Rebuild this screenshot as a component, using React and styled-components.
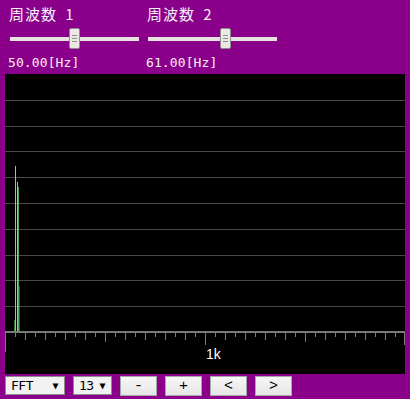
import React from "react";
import styled, { createGlobalStyle } from "styled-components";

const GlobalStyle = createGlobalStyle`
  html, body {
    margin: 0;
    padding: 0;
    background: #8b008b;
  }
`;

const sliders = [
  { label: "周波数 1", value: 50, hz: "50.00" },
  { label: "周波数 2", value: 61, hz: "61.00" },
];

const W = 400;
const AXIS = 258;

export default function App() {
  return (
    <Page>
      <GlobalStyle />
      <Controls>
        {sliders.map((s) => (
          <Group key={s.label}>
            <Label>{s.label}</Label>
            <Slider>
              <Track />
              <Thumb style={{ left: `${(118 * s.value) / 100}px` }} />
            </Slider>
            <Value>{s.hz}[Hz]</Value>
          </Group>
        ))}
      </Controls>
      <Screen>
        <Spectrum />
      </Screen>
      <Toolbar>
        <Picker $width={60}>
          <span>FFT</span>
          <Arrow>▼</Arrow>
        </Picker>
        <Picker $width={39}>
          <span>13</span>
          <Arrow>▼</Arrow>
        </Picker>
        <Button>-</Button>
        <Button>+</Button>
        <Button>&lt;</Button>
        <Button>&gt;</Button>
      </Toolbar>
    </Page>
  );
}

function Spectrum() {
  const grid = [];
  for (let k = 1; k < 10; k++) grid.push(Math.round(25.8 * k) + 0.5);
  const ticks = [];
  for (let k = 0; k <= 40; k++) {
    let len = k % 2 ? 5 : 8;
    if (k % 10 === 0) len = 10;
    if (k === 20 || k === 40) len = 13;
    if (k === 0) len = 20;
    const x = k === 40 ? 399.5 : k * 10 + 0.5;
    ticks.push(<line key={k} x1={x} x2={x} y1={AXIS} y2={AXIS + len} />);
  }
  return (
    <svg width={W} height={300} viewBox="0 0 400 300">
      <g stroke="#474747" strokeWidth="1">
        {grid.map((y) => (
          <line key={y} x1="0" x2={W} y1={y} y2={y} />
        ))}
      </g>
      <g stroke="#6be86b" strokeWidth="1">
        <line x1="9.7" x2="9.7" y1={AXIS} y2="246" opacity="0.6" />
        <line x1="10.5" x2="10.5" y1={AXIS} y2="92" />
        <line x1="12.5" x2="12.5" y1={AXIS} y2="108" />
        <line x1="13.5" x2="13.5" y1={AXIS} y2="113" opacity="0.7" />
        <line x1="14.3" x2="14.3" y1={AXIS} y2="212" opacity="0.5" />
      </g>
      <g stroke="#7a7a7a">
        <line x1="0" x2={W} y1={AXIS} y2={AXIS} strokeWidth="2" />
        {ticks}
      </g>
      <text x="201" y="285" fill="#ffffff" fontSize="14" fontFamily="'Liberation Sans', sans-serif">
        1k
      </text>
    </svg>
  );
}

const Page = styled.div`
  width: 410px;
  height: 399px;
  box-sizing: border-box;
  padding: 5px 5px 0;
  background: #8b008b;
  color: #f6f0f6;
  overflow: hidden;
`;

const Controls = styled.div`
  display: flex;
  gap: 8px;
  padding-left: 3px;
`;

const Group = styled.div`
  width: 130px;
  display: flex;
  flex-direction: column;
`;

const Label = styled.div`
  margin-left: 1px;
  font: 15px/18px "Noto Sans CJK JP", sans-serif;
  letter-spacing: 1px;
  word-spacing: 4px;
`;

const Slider = styled.div`
  position: relative;
  margin: 5px 0 0 2px;
  width: 129px;
  height: 21px;
  display: flex;
  align-items: center;
`;

const Track = styled.div`
  width: 100%;
  height: 4px;
  background: #e6e2de;
`;

const Thumb = styled.div`
  position: absolute;
  top: 0;
  width: 11px;
  height: 21px;
  box-sizing: border-box;
  border: 1px solid #8e8e8e;
  border-radius: 2px;
  background:
    linear-gradient(#8e8e8e, #8e8e8e) 2px 6px / 5px 1px no-repeat,
    linear-gradient(#8e8e8e, #8e8e8e) 2px 9px / 5px 1px no-repeat,
    linear-gradient(#8e8e8e, #8e8e8e) 2px 12px / 5px 1px no-repeat,
    #ebe8e4;
`;

const Value = styled.div`
  margin-top: 6px;
  font: 13px/16px "DejaVu Sans Mono", monospace;
  letter-spacing: 0.1px;
`;

const Screen = styled.div`
  margin-top: 3px;
  width: 400px;
  height: 300px;
  background: #000;
  svg {
    display: block;
  }
`;

const Toolbar = styled.div`
  display: flex;
  gap: 8px;
  margin-top: 2px;
  align-items: flex-start;
`;

const Picker = styled.div`
  width: ${(p) => p.$width}px;
  height: 19px;
  box-sizing: border-box;
  border: 1px solid #8c8c8c;
  background: #f2f2f2;
  color: #000;
  display: flex;
  align-items: center;
  justify-content: space-between;
  padding: 0 6px 0 5px;
  font: 13px "DejaVu Sans Mono", monospace;
  letter-spacing: -0.5px;
`;

const Arrow = styled.span`
  font-size: 10px;
`;

const Button = styled.div`
  width: 37px;
  height: 20px;
  box-sizing: border-box;
  border: 1px solid #a8a8a8;
  background: linear-gradient(#f6f6f6, #e6e6e6);
  color: #000;
  display: flex;
  align-items: center;
  justify-content: center;
  font: 15px "Liberation Mono", monospace;
`;
